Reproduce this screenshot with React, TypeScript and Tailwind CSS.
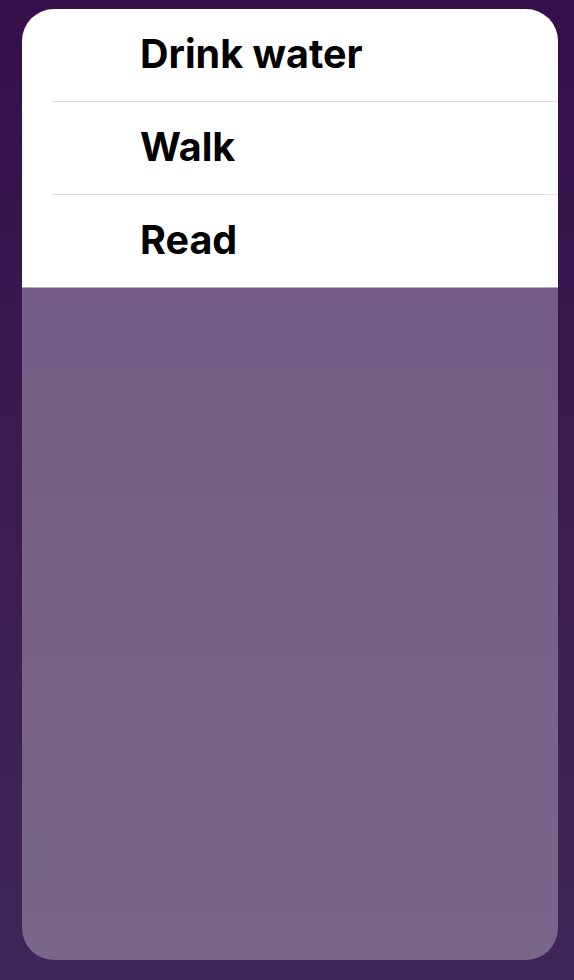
const habits = ['Drink water', 'Walk', 'Read'];

export default function App() {
  return (
    <div className="h-[980px] bg-gradient-to-b from-[#360e4a] to-[#3f2759] pt-[9px] pl-[22px] pr-[16px] pb-[20px] flex">
      <div className="flex-1 flex flex-col rounded-[32px] overflow-hidden">
        <ul className="bg-white">
          {habits.map((h, i) => (
            <li key={h} className={i < habits.length - 1 ? 'pl-[30px]' : ''}>
              <div
                className={`h-[93px] flex items-center ${
                  i < habits.length - 1 ? 'border-b border-[#e2e2e4] pl-[88px]' : 'border-b border-[#b3a9ba] pl-[118px]'
                }`}
              >
                <span className="text-[39.5px] font-bold text-black leading-none font-['Inter',sans-serif]">
                  {h}
                </span>
              </div>
            </li>
          ))}
        </ul>
        <div className="flex-1 bg-white/30" />
      </div>
    </div>
  );
}
